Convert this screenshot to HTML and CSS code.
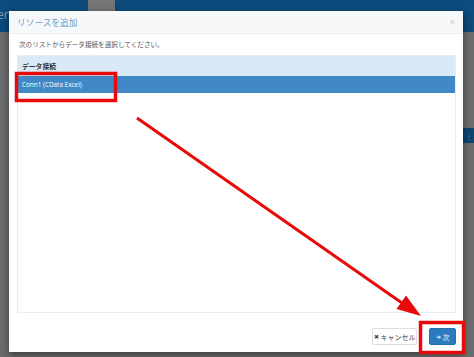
FILE: index.html
```html
<!DOCTYPE html>
<html lang="ja">
<head>
  <meta charset="UTF-8">
  <title>リソースを追加</title>
  <link rel="stylesheet" href="styles.css">
</head>
<body>
  <div class="topbar">
    <span class="brand">er</span>
    <span class="tab"></span>
  </div>
  <div class="side-btn">⋮</div>

  <div class="modal">
    <div class="modal-header">
      <h4 class="modal-title">リソースを追加</h4>
      <span class="close">×</span>
    </div>
    <div class="modal-body">
      <p class="hint">次のリストからデータ接続を選択してください。</p>
      <div class="panel">
        <div class="panel-head">データ接続</div>
        <div class="row selected">Conn1 (CData Excel)</div>
      </div>
    </div>
    <div class="modal-footer">
      <button class="btn btn-default"><span class="ico">✖</span>キャンセル</button>
      <button class="btn btn-primary"><span class="ico">➔</span>次</button>
    </div>
  </div>

  <!-- annotation layer -->
  <svg class="marks" width="474" height="357" viewBox="0 0 474 357">
    <rect x="16.5" y="73.5" width="99" height="27" fill="none" stroke="#e8090b" stroke-width="3.5"/>
    <rect x="420.5" y="322.5" width="43" height="30" fill="none" stroke="#e8090b" stroke-width="3.5"/>
    <line x1="137" y1="118" x2="402" y2="303" stroke="#e8090b" stroke-width="3"/>
    <polygon points="421,316 396.5,309 406,295.5" fill="#e8090b"/>
  </svg>
</body>
</html>
```

FILE: styles.css
```css
body {
  margin: 0;
  width: 474px; height: 357px;
  overflow: hidden;
  background: #6c6c6c;
  font-family: "Open Sans", "Noto Sans CJK JP", sans-serif;
  position: relative;
}
.topbar {
  height: 32px;
  background: #0c4b7c;
  display: flex; align-items: flex-start;
}
.brand { color: #7f9ab1; font-size: 12px; padding-top: 6px; width: 88px; text-indent: -3px; }
.tab { width: 27px; height: 32px; background: #757575; }
.side-btn {
  position: absolute; right: 0; top: 128px;
  width: 11px; height: 15px;
  background: #0d466f; color: #6f8ba3; font-size: 8px; line-height: 15px; text-align: center;
}

.modal {
  position: absolute; left: 9px; top: 11px;
  width: 454px; height: 341px;
  background: #fff;
  box-shadow: 0 3px 8px rgba(0,0,0,0.45);
  display: flex; flex-direction: column;
}
.modal-header {
  height: 22px;
  background: #f7f8f9;
  border-bottom: 1px solid #eceff1;
  display: flex; align-items: center; justify-content: space-between;
  padding: 0 8px;
}
.modal-title {
  margin: 0; font-weight: normal; font-size: 8.7px; color: #6b9bc6;
  font-family: "Noto Sans CJK JP", sans-serif;
}
.close { color: #c3c3c3; font-size: 9px; margin-top: -2px; }

.modal-body { flex: 1; padding: 3px 7px 0 8px; display: flex; flex-direction: column; }
.hint {
  margin: 0 0 4px 2px; font-size: 6.6px; color: #555; line-height: 14px;
  font-family: "Noto Sans CJK JP", sans-serif;
}
.panel { flex: 1; border: 1px solid #e3eff5; }
.panel-head {
  height: 20px; line-height: 20px;
  background: #d9eaf6;
  padding-left: 4px;
  font-size: 6.8px; font-weight: bold; color: #333;
  font-family: "Noto Sans CJK JP", sans-serif;
}
.row { height: 17px; line-height: 17px; padding-left: 4px; font-size: 6.4px; }
.row.selected { background: #4089c6; color: #fff; }

.modal-footer {
  height: 39px;
  display: flex; justify-content: flex-end; align-items: flex-start;
  gap: 12px; padding: 15px 7px 0 0;
  box-sizing: border-box;
}
.btn {
  height: 17px; border-radius: 2px; box-sizing: border-box;
  font-family: "Noto Sans CJK JP", sans-serif; font-size: 7px;
  padding: 0; white-space: nowrap;
  display: flex; align-items: center; justify-content: center;
}
.btn .ico { font-size: 6px; margin-right: 2px; }
.btn-default { width: 45px; background: #fff; border: 1px solid #ddd; color: #444; }
.btn-primary { width: 27px; background: #2b7bbf; border: 1px solid #2770ad; color: #fff; }

.marks { position: absolute; left: 0; top: 0; }
```
